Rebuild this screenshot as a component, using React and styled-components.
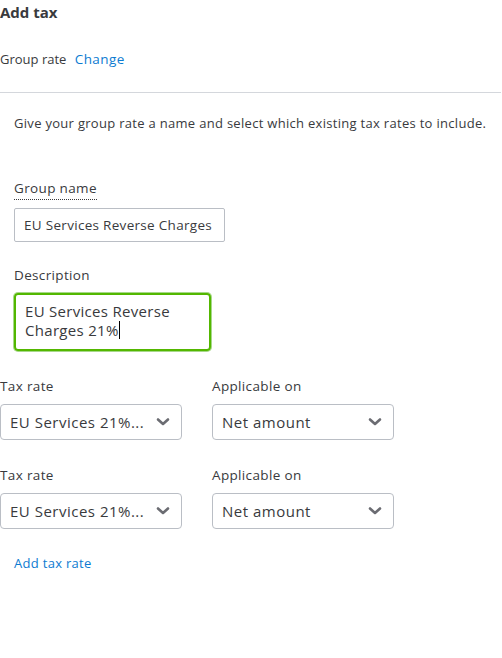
import React from 'react';
import styled, { createGlobalStyle } from 'styled-components';

const Global = createGlobalStyle`
  html, body { margin: 0; padding: 0; background: #fff; }
  body { font-family: "Open Sans", "Noto Sans", sans-serif; color: #393a3d; }
  * { box-sizing: border-box; }
`;

function Chevron() {
  return (
    <svg width="14" height="10" viewBox="0 0 14 10">
      <path d="M2 2.5 L7 7 L12 2.5" fill="none" stroke="#6b6c72" strokeWidth="2.6" strokeLinecap="round" strokeLinejoin="round" />
    </svg>
  );
}

function SelectBox({ value, width }) {
  return (
    <Select width={width}>
      <SelectText>{value}</SelectText>
      <Chevron />
    </Select>
  );
}

export default function App() {
  const rows = [1, 2];
  return (
    <Page>
      <Global />
      <Title>Add tax</Title>
      <RateLine>
        Group rate <Link>Change</Link>
      </RateLine>
      <Divider />
      <Body>
        <Intro>Give your group rate a name and select which existing tax rates to include.</Intro>
        <Field gap={46}>
          <Label dotted>Group name</Label>
          <Input>EU Services Reverse Charges</Input>
        </Field>
        <Field gap={24}>
          <Label>Description</Label>
          <TextArea>
            EU Services Reverse<br />Charges 21%<Caret />
          </TextArea>
        </Field>
      </Body>
      {rows.map((r) => (
        <RateRow key={r}>
          <Column>
            <Label>Tax rate</Label>
            <SelectBox value="EU Services 21%..." width={182} />
          </Column>
          <Column>
            <Label>Applicable on</Label>
            <SelectBox value="Net amount" width={182} />
          </Column>
        </RateRow>
      ))}
      <AddLink>Add tax rate</AddLink>
    </Page>
  );
}

const Page = styled.div`
  width: 502px;
  height: 658px;
  padding-top: 2px;
`;

const Title = styled.div`
  font-size: 15px;
  font-weight: 700;
  color: #393a3d;
  line-height: 20px;
`;

const RateLine = styled.div`
  margin-top: 27px;
  font-size: 13px;
  line-height: 20px;
  color: #393a3d;
`;

const Link = styled.span`
  color: #0d7bd1;
  margin-left: 5px;
  font-size: 13.5px;
  letter-spacing: 0.4px;
`;

const Divider = styled.div`
  margin-top: 23px;
  height: 1px;
  background: #d4d7dc;
  width: 501px;
`;

const Body = styled.div`
  padding-left: 14px;
`;

const Intro = styled.div`
  margin-top: 20px;
  font-size: 13px;
  letter-spacing: 0.3px;
  line-height: 20px;
  color: #393a3d;
`;

const Field = styled.div`
  margin-top: ${(p) => p.gap}px;
  display: flex;
  flex-direction: column;
  align-items: flex-start;
`;

const Label = styled.div`
  font-size: 13.5px;
  letter-spacing: 0.35px;
  line-height: 18px;
  color: #393a3d;
  font-weight: 500;
  padding-bottom: ${(p) => (p.dotted ? '2px' : '0')};
  border-bottom: ${(p) => (p.dotted ? '1px dotted #393a3d' : 'none')};
  margin-bottom: ${(p) => (p.dotted ? '8px' : '9px')};
`;

const Input = styled.div`
  width: 211px;
  height: 34px;
  border: 1px solid #babec5;
  border-radius: 2px;
  font-size: 13.5px;
  letter-spacing: 0.3px;
  padding: 0 9px;
  display: flex;
  align-items: center;
  color: #393a3d;
  white-space: nowrap;
`;

const TextArea = styled.div`
  width: 197px;
  height: 58px;
  border: 2px solid #53b700;
  box-shadow: 0 0 0 1px #a7d88a;
  border-radius: 4px;
  padding: 7px 9px;
  font-size: 15px;
  letter-spacing: 0.3px;
  line-height: 19px;
  color: #393a3d;
`;

const Caret = styled.span`
  display: inline-block;
  width: 1px;
  height: 18px;
  background: #000;
  vertical-align: -3px;
`;

const RateRow = styled.div`
  display: flex;
  gap: 30px;
  margin-top: 26px;
  & + & { margin-top: 26px; }
`;

const Column = styled.div`
  display: flex;
  flex-direction: column;
`;

const Select = styled.div`
  width: ${(p) => p.width}px;
  height: 36px;
  border: 1px solid #babec5;
  border-radius: 4px;
  display: flex;
  align-items: center;
  justify-content: space-between;
  padding: 0 11px 0 9px;
`;

const SelectText = styled.span`
  font-size: 15px;
  letter-spacing: 0.5px;
  color: #393a3d;
  white-space: nowrap;
`;

const AddLink = styled.div`
  margin-top: 25px;
  margin-left: 14px;
  font-size: 13px;
  letter-spacing: 0.3px;
  color: #0d7bd1;
`;
